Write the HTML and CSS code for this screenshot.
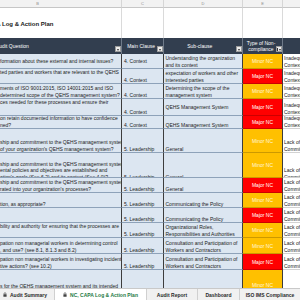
FILE: index.html
```html
<!doctype html>
<html>
<head>
    <meta charset="utf-8">
    <title>NC, CAPA Log &amp; Action Plan</title>
    <link rel="stylesheet" href="styles.css">
</head>
<body>
<div class="app">
    <div class="sheet">
        <div class="row letters">
            <div class="c">B</div><div class="c">C</div><div class="c">D</div><div class="c">E</div><div class="c"></div>
        </div>
        <div class="row title">
            <div class="c b"><h1>NC, CAPA Log &amp; Action Plan</h1></div>
            <div class="c"></div><div class="c"></div><div class="c"></div><div class="c"></div>
        </div>
        <div class="row head">
            <div class="c b"><span class="lbl">Audit Question</span><i class="flt"></i></div>
            <div class="c k"><span class="lbl">Main Clause</span><i class="flt"></i></div>
            <div class="c d"><span class="lbl">Sub-clause</span><i class="flt"></i></div>
            <div class="c e"><span class="lbl">Type of Non-<br>compliance</span><i class="flt sort"></i></div>
            <div class="c"></div>
        </div>

        <div class="row h15">
            <div class="c b mid"><p>formation about these external and internal issues?</p></div>
            <div class="c k mid"><p>4. Context</p></div>
            <div class="c d"><p>Understanding the organization</p><p>and its context</p></div>
            <div class="c nc minor">Minor NC</div>
            <div class="c f"><p>Inadequate</p><p>Context</p></div>
        </div>
        <div class="row h15">
            <div class="c b top"><p>ted parties and workers that are relevant to the QEHS</p></div>
            <div class="c k"><p>4. Context</p></div>
            <div class="c d"><p>expectation of workers and other</p><p>interested parties</p></div>
            <div class="c nc major">Major NC</div>
            <div class="c f"><p>Inadequate</p><p>Context</p></div>
        </div>
        <div class="row h15">
            <div class="c b"><p>ments of ISO 9001:2015, ISO 14001:2015 and ISO</p><p>determined scope of the QEHS management system?</p></div>
            <div class="c k"><p>4. Context</p></div>
            <div class="c d"><p>Determining the scope of the</p><p>management system</p></div>
            <div class="c nc minor">Minor NC</div>
            <div class="c f"><p>Inadequate</p><p>Context</p></div>
        </div>
        <div class="row h17">
            <div class="c b top"><p>ces needed for these processes and ensure their</p></div>
            <div class="c k"><p>4. Context</p></div>
            <div class="c d mid"><p>QEHS Management System</p></div>
            <div class="c nc major">Major NC</div>
            <div class="c f"><p>Inadequate</p><p>Context</p></div>
        </div>
        <div class="row h13">
            <div class="c b"><p>on retain documented information to have confidence</p><p>ned?</p></div>
            <div class="c k"><p>4. Context</p></div>
            <div class="c d"><p>QEHS Management System</p></div>
            <div class="c nc major">Major NC</div>
            <div class="c f"><p>Inadequate</p><p>Context</p></div>
        </div>
        <div class="row h24">
            <div class="c b"><p>ship and commitment to the QEHS management system</p><p>of your organization's QEHS management system?</p></div>
            <div class="c k"><p>5. Leadership</p></div>
            <div class="c d"><p>General</p></div>
            <div class="c nc minor">Minor NC</div>
            <div class="c f"><p>Lack of</p><p>Commitment</p></div>
        </div>
        <div class="row h25 sink">
            <div class="c b"><p>ship and commitment to the QEHS management system</p><p>ental policies and objectives are established and</p><p>ation's goals (See 6.2) and its context (See 4.0)?</p></div>
            <div class="c k"><p>5. Leadership</p></div>
            <div class="c d"><p>General</p></div>
            <div class="c nc minor">Minor NC</div>
            <div class="c f"><p>Lack of</p><p>Commitment</p></div>
        </div>
        <div class="row h15">
            <div class="c b"><p>ship and commitment to the QEHS management system</p><p>rated into your organization's processes?</p></div>
            <div class="c k"><p>5. Leadership</p></div>
            <div class="c d"><p>General</p></div>
            <div class="c nc major">Major NC</div>
            <div class="c f"><p>Lack of</p><p>Commitment</p></div>
        </div>
        <div class="row h15">
            <div class="c b"><p>tion, as appropriate?</p></div>
            <div class="c k"><p>5. Leadership</p></div>
            <div class="c d"><p>Communicating the Policy</p></div>
            <div class="c nc minor">Minor NC</div>
            <div class="c f"><p>Lack of</p><p>Commitment</p></div>
        </div>
        <div class="row h15">
            <div class="c b"></div>
            <div class="c k"><p>5. Leadership</p></div>
            <div class="c d"><p>Communicating the Policy</p></div>
            <div class="c nc major">Major NC</div>
            <div class="c f"><p>Lack of</p><p>Commitment</p></div>
        </div>
        <div class="row h15">
            <div class="c b top"><p>bility and authority for ensuring that the processes are</p></div>
            <div class="c k"><p>5. Leadership</p></div>
            <div class="c d"><p>Organizational Roles,</p><p>Responsibilities and Authorities</p></div>
            <div class="c nc minor">Minor NC</div>
            <div class="c f"><p>Lack of</p><p>Commitment</p></div>
        </div>
        <div class="row h16">
            <div class="c b"><p>pation non managerial workers in determining control</p><p>, and use? (see 8.1, 8.1.3 and 8.2)</p></div>
            <div class="c k"><p>5. Leadership</p></div>
            <div class="c d"><p>Consultation and Participation of</p><p>Workers and Contractors</p></div>
            <div class="c nc minor">Minor NC</div>
            <div class="c f"><p>Lack of</p><p>Commitment</p></div>
        </div>
        <div class="row h16">
            <div class="c b"><p>pation non managerial workers in investigating incidents</p><p>tive actions? (see 10.2)</p></div>
            <div class="c k"><p>5. Leadership</p></div>
            <div class="c d"><p>Consultation and Participation of</p><p>Workers and Contractors</p></div>
            <div class="c nc major">Major NC</div>
            <div class="c f"><p>Lack of</p><p>Commitment</p></div>
        </div>
        <div class="row h30">
            <div class="c b top"><p></p><p></p><p>s for the QEHS management system and its intended</p></div>
            <div class="c k"></div>
            <div class="c d"></div>
            <div class="c nc minor">Minor NC</div>
            <div class="c f"></div>
        </div>
    </div>

    <div class="tabs">
        <div class="tab t1">
            <svg class="lock" viewBox="0 0 8 10" width="4" height="5"><path d="M2.2 4.8V3.2a1.8 1.8 0 0 1 3.6 0v1.6" fill="none" stroke="#444" stroke-width="1.3"/><rect x="0.8" y="4.6" width="6.4" height="5" rx="0.8" fill="#444"/></svg>
            Audit Summary
        </div>
        <div class="tab t2 on">
            <svg class="lock" viewBox="0 0 8 10" width="4" height="5"><path d="M2.2 4.8V3.2a1.8 1.8 0 0 1 3.6 0v1.6" fill="none" stroke="#444" stroke-width="1.3"/><rect x="0.8" y="4.6" width="6.4" height="5" rx="0.8" fill="#444"/></svg>
            NC, CAPA Log &amp; Action Plan
        </div>
        <div class="tab t3">Audit Report</div>
        <div class="tab t4">Dashboard</div>
        <div class="tab t5">ISO IMS Compliance</div>
    </div>
</div>
</body>
</html>
```

FILE: styles.css
```css
*{
    margin:0;
    padding:0;
    box-sizing:border-box;
}
html,body{
    width:300px;
    height:300px;
    overflow:hidden;
}
body{
    font-family:"Liberation Sans", Arial, sans-serif;
    color:#222;
    background:#fff;
}
.app{
    height:300px;
    display:flex;
    flex-direction:column;
}
.sheet{
    flex:1;
    overflow:hidden;
}

/* one grid per sheet row, column B starts off-screen */
.row{
    display:grid;
    grid-template-columns:168px 42px 79px 40px 60px;
    width:389px;
    margin-left:-46px;
    font-size:5px;
}
.h13{height:13px;}
.h15{height:15px;}
.h16{height:16px;}
.h17{height:17px;}
.h24{height:24px;}
.h25{height:25px;}
.h30{height:30px;}

.c{
    display:flex;
    flex-direction:column;
    justify-content:flex-end;
    overflow:hidden;
    white-space:nowrap;
    border-right:1px solid #3d3d3d;
    border-bottom:1px solid #8ea2b9;
}
.c p{
    line-height:6.5px;
    min-height:6.5px;
}
.b,.k,.d{
    background:#dce6f1;
}
.b{padding-left:46px;}
.k{padding-left:2px;}
.d{padding-left:1.5px;}
.f{
    padding-left:1px;
    background:#fff;
    border-right:0;
    border-bottom-color:#d2d2d2;
}
.mid{justify-content:center;}
.top{justify-content:flex-start;}
.sink .c p:last-child{margin-bottom:-3px;}

.nc{
    align-items:center;
    justify-content:center;
    color:#fff;
    border-bottom-color:rgba(0,0,0,0.2);
}
.minor{
    background:#ffc000;
    color:#fff6dc;
}
.major{
    background:#ff0000;
}

/* column letters */
.letters{
    height:8px;
    background:#f2f2f2;
}
.letters .c{
    background:none;
    padding:0;
    align-items:center;
    justify-content:center;
    font-size:4px;
    color:#8c8c8c;
    border-right:1px solid #d6d6d6;
    border-bottom:1px solid #c6c6c6;
}

/* title */
.title{
    height:30px;
}
.title .c{
    background:none;
    border-right:1px solid #dadada;
    border-bottom:0;
    padding-bottom:10px;
}
.title .b{padding-left:18px;}
.title h1{
    font-size:6px;
    line-height:7px;
    font-weight:bold;
    color:#1a1a1a;
}

/* header row */
.head{
    height:16px;
    background:#323e4f;
    color:#fff;
}
.head .c{
    background:none;
    flex-direction:row;
    align-items:center;
    gap:2px;
    border-right:1px solid #6f7a89;
    border-bottom:0;
}
.head .b{padding-left:42px;}
.head .lbl{flex:1;}
.head .k .lbl{text-align:right;}
.head .d .lbl,
.head .e .lbl{text-align:center;}
.head .e{gap:0;}
.head .e .lbl{
    line-height:6.5px;
    padding-left:3px;
}
.flt{
    flex:none;
    width:6px;
    height:6px;
    align-self:flex-end;
    margin-bottom:2px;
    background:#ececec;
    border:1px solid #9c9c9c;
    position:relative;
}
.flt::after{
    content:"";
    position:absolute;
    left:0.5px;
    top:1.5px;
    border-left:1.5px solid transparent;
    border-right:1.5px solid transparent;
    border-top:2px solid #333;
}
.flt.sort::before{
    content:"";
    position:absolute;
    left:0;
    top:0.5px;
    width:1px;
    height:3px;
    background:#333;
}
.flt.sort::after{
    left:1.5px;
}

/* sheet tabs */
.tabs{
    height:12px;
    flex:none;
    display:flex;
    background:#f1f1f1;
    border-top:1px solid #c9c9c9;
    font-size:5px;
    font-weight:bold;
    color:#2a2a2a;
}
.tab{
    display:flex;
    align-items:center;
    justify-content:center;
    gap:3px;
    white-space:nowrap;
    border-right:1px solid #d0d0d0;
}
.t1{width:55px;justify-content:flex-start;padding-left:3px;}
.t2{width:92px;}
.t3{width:51px;}
.t4{width:42px;}
.t5{width:60px;border-right:0;}
.on{
    background:#fff;
    color:#1e7a45;
}
.lock{flex:none;}
```
